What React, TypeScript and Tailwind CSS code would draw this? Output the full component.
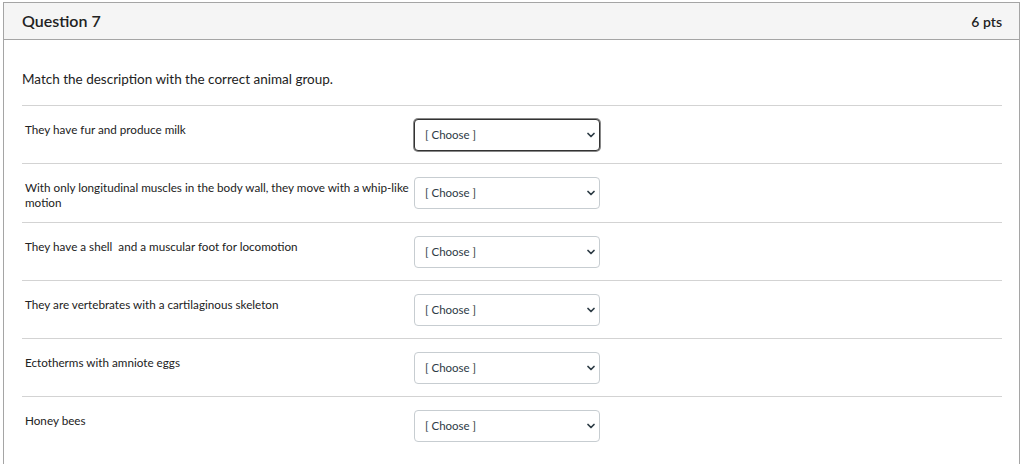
import { ChevronDown } from 'lucide-react';

const rows = [
  'They have fur and produce milk',
  'With only longitudinal muscles in the body wall, they move with a whip-like motion',
  'They have a shell  and a muscular foot for locomotion',
  'They are vertebrates with a cartilaginous skeleton',
  'Ectotherms with amniote eggs',
  'Honey bees',
];

function ChooseBox({ focused }: { focused?: boolean }) {
  return (
    <div
      className={`flex h-[32px] w-[186px] shrink-0 items-center justify-between rounded-[4px] bg-white pl-[10px] pr-[2px] text-[11.5px] text-[#2d3b45] ${
        focused ? 'border border-[#333] shadow-[0_0_0_1px_#888]' : 'border border-[#c7cdd1]'
      }`}
    >
      <span>[ Choose ]</span>
      <ChevronDown className="h-3 w-3 text-[#2d3b45]" strokeWidth={3.5} />
    </div>
  );
}

export default function App() {
  return (
    <div className="h-[464px] w-[1024px] overflow-hidden bg-white pt-[2px] pl-[3px] font-['Lato',sans-serif] text-[#222]">
      <div className="w-[1017px] border border-[#a5a5a5] pb-[20px]">
        {/* Header */}
        <div className="flex h-[37px] items-center justify-between border-b border-[#a5a5a5] bg-[#f5f5f5] pl-[18px] pr-[17px]">
          <span className="text-[16px] font-semibold">Question 7</span>
          <span className="text-[14px] font-semibold">6 pts</span>
        </div>

        <div className="pl-[18px] pr-[17px] pt-[30px]">
          <p className="mb-[17px] text-[13.5px] leading-[18px]">Match the description with the correct animal group.</p>

          {rows.map((text, i) => (
            <div key={i} className="flex border-t border-[#d3d3d3] pt-[13px] pb-[12px] pl-[3px] last:pb-[14px]">
              <div className="w-[389px] shrink-0 whitespace-pre-wrap pt-[3px] pr-[2px] text-[11.7px] leading-[15px]">{text}</div>
              <ChooseBox focused={i === 0} />
            </div>
          ))}
        </div>
      </div>
    </div>
  );
}
